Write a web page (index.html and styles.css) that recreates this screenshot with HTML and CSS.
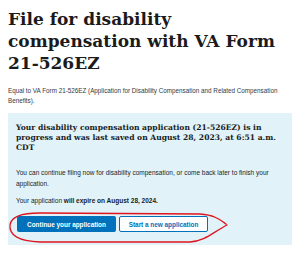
FILE: index.html
```html
<!DOCTYPE html>
<html lang="en">
<head>
<meta charset="utf-8">
<title>File for disability compensation</title>
<link rel="stylesheet" href="styles.css">
</head>
<body>
<main class="page">
  <h1 class="title">File for disability compensation with VA Form 21-526EZ</h1>
  <p class="intro">Equal to VA Form 21-526EZ (Application for Disability Compensation and Related Compensation Benefits).</p>
  <section class="alert">
    <h2 class="alert-heading">Your disability compensation application (21-526EZ) is in progress and was last saved on August 28, 2023, at 6:51 a.m. CDT</h2>
    <p class="alert-text">You can continue filing now for disability compensation, or come back later to finish your application.</p>
    <p class="alert-text">Your application <strong>will expire on August 28, 2024.</strong></p>
    <div class="actions">
      <a class="btn btn-primary" href="#">Continue your application</a>
      <a class="btn btn-secondary" href="#">Start a new application</a>
    </div>
  </section>
  <svg class="scribble" width="300" height="253" viewBox="0 0 300 253" aria-hidden="true">
    <path d="M226 224 C219 219 214 215 200 214 L40 213 C22 213 11 216 10 225 C9 235 18 241 40 242 L190 242 C205 241 212 233 227 225" fill="none" stroke="#e0141e" stroke-width="1.3" stroke-linecap="round"/>
  </svg>
</main>
</body>
</html>
```
FILE: styles.css
```css
html, body {
  margin: 0;
  padding: 0;
  background: #ffffff;
}
.page {
  position: relative;
  padding: 8px;
}
.title {
  margin: 0;
  font-family: "DejaVu Serif", serif;
  font-weight: bold;
  font-size: 17px;
  line-height: 22px;
  color: #1b1b1b;
}
.intro {
  margin: 12px 0 0;
  font-family: "Liberation Sans", sans-serif;
  font-size: 6.3px;
  line-height: 10px;
  color: #323a45;
}
.alert {
  margin-top: 7px;
  background: #e1f3f8;
  padding: 10px 8px 13px;
}
.alert-heading {
  margin: 0 0 14px;
  font-family: "DejaVu Serif", serif;
  font-weight: bold;
  font-size: 7.6px;
  line-height: 10px;
  color: #1b1b1b;
}
.alert-text {
  margin: 0 0 6px;
  font-family: "Liberation Sans", sans-serif;
  font-size: 6.5px;
  line-height: 11px;
  color: #1b1b1b;
}
.alert-text strong {
  font-weight: bold;
}
.actions {
  display: flex;
  gap: 3px;
  margin-top: 10px;
  margin-left: 1px;
}
.btn {
  display: flex;
  align-items: center;
  justify-content: center;
  box-sizing: border-box;
  height: 16px;
  border-radius: 2px;
  font-family: "Liberation Sans", sans-serif;
  font-weight: bold;
  font-size: 6.4px;
  text-decoration: none;
}
.btn-primary {
  width: 99px;
  background: #0071bb;
  color: #ffffff;
}
.btn-secondary {
  width: 89px;
  background: #ffffff;
  color: #0071bb;
  border: 1px solid #0071bb;
}
.scribble {
  position: absolute;
  left: 0;
  top: 0;
  pointer-events: none;
}
```
